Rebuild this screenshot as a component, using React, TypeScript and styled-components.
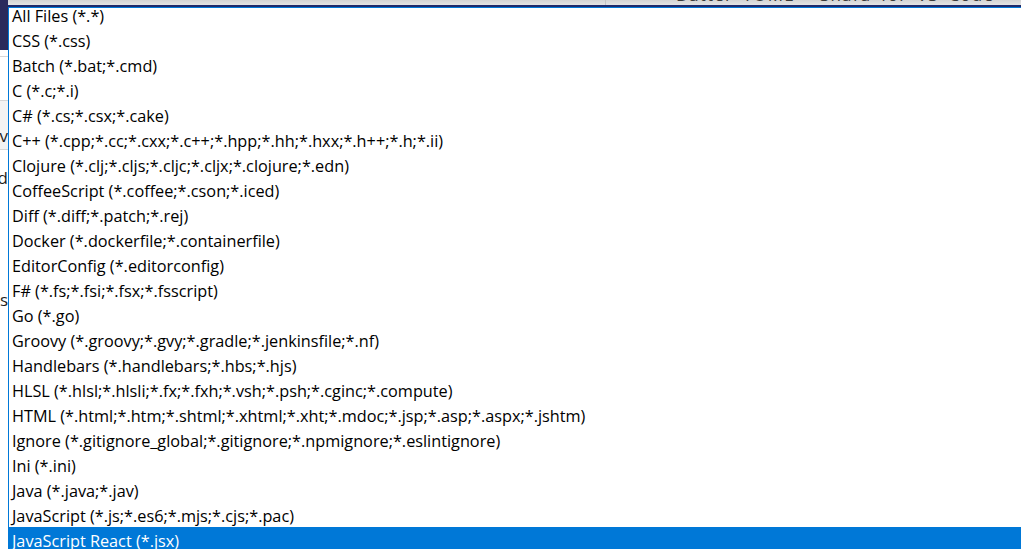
import React from "react";
import styled, { createGlobalStyle } from "styled-components";

const GlobalStyle = createGlobalStyle`
  html, body { margin: 0; padding: 0; background: #ffffff; overflow: hidden; }
  #root { width: 1021px; height: 549px; }
`;

const Page = styled.div`
  width: 1021px;
  height: 549px;
  display: flex;
  overflow: hidden;
  font-family: "Open Sans", "Noto Sans", sans-serif;
`;

const LeftStrip = styled.div`
  width: 8px;
  flex: none;
  display: flex;
  flex-direction: column;
  overflow: hidden;
  background: #ffffff;
`;

const NavyBlock = styled.div`
  height: 50px;
  flex: none;
  background: #2b2a5c;
`;

const StripSection = styled.div<{ $h: number; $bg?: string; $line?: boolean }>`
  height: ${(p) => p.$h}px;
  flex: none;
  background: ${(p) => p.$bg || "#ffffff"};
  border-bottom: ${(p) => (p.$line ? "1px solid #d6d6d6" : "none")};
  display: flex;
  align-items: flex-end;
  justify-content: flex-end;
`;

const StripText = styled.span<{ $pb: number }>`
  font-size: 17px;
  line-height: 20px;
  color: #1e1e1e;
  padding-bottom: ${(p) => p.$pb}px;
  white-space: nowrap;
`;

const Main = styled.div`
  flex: 1;
  display: flex;
  flex-direction: column;
  min-width: 0;
`;

const TopBar = styled.div`
  height: 5px;
  flex: none;
  background: linear-gradient(#d4d4d4, #e4e4e4);
  border-bottom: 2px solid #1f2a6b;
  display: flex;
  overflow: hidden;
`;

const TopSep = styled.div`
  width: 597px;
  flex: none;
  border-right: 1px solid #c4c4c4;
`;

const TopText = styled.div`
  margin-left: 62px;
  margin-top: -14px;
  font-size: 17px;
  line-height: 17px;
  color: #3a3a3a;
  white-space: nowrap;
  letter-spacing: 1.2px;
  word-spacing: 4px;
`;

const Dropdown = styled.div`
  flex: 1;
  border-left: 1px solid #0078d7;
  border-top: 1px solid #0078d7;
  background: #ffffff;
  overflow: hidden;
`;

const List = styled.ul`
  list-style: none;
  margin: -6px 0 0 0;
  padding: 0;
`;

const Item = styled.li<{ $selected?: boolean }>`
  box-sizing: border-box;
  height: 25px;
  padding: 3px 0 0 3px;
  line-height: 22px;
  font-size: 16.25px;
  white-space: nowrap;
  color: ${(p) => (p.$selected ? "#ffffff" : "#000000")};
  background: ${(p) => (p.$selected ? "#0078d7" : "transparent")};
`;

const items = [
  "All Files (*.*)",
  "CSS (*.css)",
  "Batch (*.bat;*.cmd)",
  "C (*.c;*.i)",
  "C# (*.cs;*.csx;*.cake)",
  "C++ (*.cpp;*.cc;*.cxx;*.c++;*.hpp;*.hh;*.hxx;*.h++;*.h;*.ii)",
  "Clojure (*.clj;*.cljs;*.cljc;*.cljx;*.clojure;*.edn)",
  "CoffeeScript (*.coffee;*.cson;*.iced)",
  "Diff (*.diff;*.patch;*.rej)",
  "Docker (*.dockerfile;*.containerfile)",
  "EditorConfig (*.editorconfig)",
  "F# (*.fs;*.fsi;*.fsx;*.fsscript)",
  "Go (*.go)",
  "Groovy (*.groovy;*.gvy;*.gradle;*.jenkinsfile;*.nf)",
  "Handlebars (*.handlebars;*.hbs;*.hjs)",
  "HLSL (*.hlsl;*.hlsli;*.fx;*.fxh;*.vsh;*.psh;*.cginc;*.compute)",
  "HTML (*.html;*.htm;*.shtml;*.xhtml;*.xht;*.mdoc;*.jsp;*.asp;*.aspx;*.jshtm)",
  "Ignore (*.gitignore_global;*.gitignore;*.npmignore;*.eslintignore)",
  "Ini (*.ini)",
  "Java (*.java;*.jav)",
  "JavaScript (*.js;*.es6;*.mjs;*.cjs;*.pac)",
  "JavaScript React (*.jsx)",
];

export default function App() {
  return (
    <>
      <GlobalStyle />
      <Page>
        <LeftStrip>
          <NavyBlock />
          <StripSection $h={6} $line />
          <StripSection $h={43} $line />
          <StripSection $h={48} $bg="#f3f3f3" $line>
            <StripText $pb={3}>ev</StripText>
          </StripSection>
          <StripSection $h={38}>
            <StripText $pb={0}>d</StripText>
          </StripSection>
          <StripSection $h={122}>
            <StripText $pb={0}>s</StripText>
          </StripSection>
        </LeftStrip>
        <Main>
          <TopBar>
            <TopSep />
            <TopText>"Butter TOML" "Snafu for VS Code"</TopText>
          </TopBar>
          <Dropdown>
            <List>
              {items.map((t, i) => (
                <Item key={t} $selected={i === items.length - 1}>
                  {t}
                </Item>
              ))}
            </List>
          </Dropdown>
        </Main>
      </Page>
    </>
  );
}
